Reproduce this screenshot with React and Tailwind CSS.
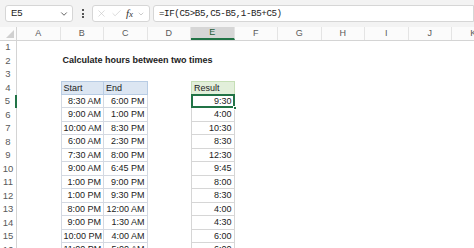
import { ChevronDown, X, Check } from "lucide-react";

const cols = ["A", "B", "C", "D", "E", "F", "G", "H", "I", "J", "K"];

// start, end, result
const rows = [
  ["8:30 AM", "6:00 PM", "9:30"],
  ["9:00 AM", "1:00 PM", "4:00"],
  ["10:00 AM", "8:30 PM", "10:30"],
  ["6:00 AM", "2:30 PM", "8:30"],
  ["7:30 AM", "8:00 PM", "12:30"],
  ["9:00 AM", "6:45 PM", "9:45"],
  ["1:00 PM", "9:00 PM", "8:00"],
  ["1:00 PM", "9:30 PM", "8:30"],
  ["8:00 PM", "12:00 AM", "4:00"],
  ["9:00 PM", "1:30 AM", "4:30"],
  ["10:00 PM", "4:00 AM", "6:00"],
  ["11:00 PM", "5:00 AM", "6:00"],
];

const cellBase = "w-[43.5px] h-full shrink-0 leading-[13px] px-[2px] whitespace-nowrap";

function Cell({ r, c }) {
  // header row of the two tables
  if (r === 4) {
    if (c === "B")
      return <div className={`${cellBase} bg-[#dce6f2] border border-[#b8cce4]`}>Start</div>;
    if (c === "C")
      return <div className={`${cellBase} bg-[#dce6f2] border-y border-r border-[#b8cce4]`}>End</div>;
    if (c === "E")
      return <div className={`${cellBase} bg-[#e2efda] border border-[#c6dfb6]`}>Result</div>;
  }
  if (r >= 5) {
    const row = rows[r - 5];
    if (c === "B")
      return <div className={`${cellBase} text-right border-l border-r border-b border-[#d4d9e2]`}>{row[0]}</div>;
    if (c === "C")
      return <div className={`${cellBase} text-right border-r border-b border-[#d4d9e2]`}>{row[1]}</div>;
    if (c === "E") {
      if (r === 5)
        return (
          <div className={`${cellBase} relative text-right border-x border-b border-[#d6d6d6]`}>
            {row[2]}
            <div className="absolute -left-[1px] -top-[1px] -right-[1px] -bottom-[1px] border-2 border-[#217346]" />
            <div className="absolute -right-[3px] -bottom-[3px] w-[4px] h-[4px] bg-[#217346] border border-white" />
          </div>
        );
      return <div className={`${cellBase} text-right border-x border-b border-[#d6d6d6]`}>{row[2]}</div>;
    }
  }
  if (r === 2 && c === "B")
    return <div className={`${cellBase} font-bold overflow-visible`}>Calculate hours between two times</div>;
  return <div className={cellBase} />;
}

export default function App() {
  return (
    <div className="w-[474px] h-[248px] overflow-hidden bg-white font-['Liberation_Sans',Arial,sans-serif] text-[9px] text-[#222]">
      {/* formula bar */}
      <div className="h-[27px] bg-[#f3f3f3] flex items-center pl-[5px] gap-[3px]">
        <div className="w-[68px] h-[17px] bg-white border border-[#d6d6d6] rounded-[3px] flex items-center justify-between pl-[5px] pr-[3px] text-[9.5px]">
          <span>E5</span>
          <ChevronDown size={10} strokeWidth={2} className="text-[#444]" />
        </div>
        <div className="w-[13px] flex flex-col items-center gap-[1.5px]">
          <span className="w-[2px] h-[2px] bg-[#555]" />
          <span className="w-[2px] h-[2px] bg-[#555]" />
          <span className="w-[2px] h-[2px] bg-[#555]" />
        </div>
        <div className="w-[58px] h-[17px] bg-white border border-[#d6d6d6] rounded-[3px] flex items-center pl-[3px] gap-[4px] text-[#c4c4c4]">
          <X size={11} strokeWidth={1.3} />
          <Check size={11} strokeWidth={1.3} />
          <span className="font-['Liberation_Serif',serif] italic text-[11px] text-[#333] leading-none">
            f<span className="text-[9px]">x</span>
          </span>
          <ChevronDown size={8} strokeWidth={1.5} className="text-[#999]" />
        </div>
        <div className="flex-1 h-[17px] bg-white border border-[#d6d6d6] rounded-l-[3px] flex items-center pl-[5px] text-[#222]">
          <span className="font-['Liberation_Mono',monospace] text-[9.2px] tracking-[-0.4px] leading-none">
            =IF(C5&gt;B5,C5-B5,1-B5+C5)
          </span>
        </div>
      </div>

      {/* column headers */}
      <div className="flex h-[13.5px] bg-[#fbfbfb] border-b border-[#d4d4d4] text-[#5a5a5a]">
        <div className="w-[17px] shrink-0 relative border-r border-[#d4d4d4]">
          <div className="absolute right-[2px] bottom-[2px] w-0 h-0 border-l-[8px] border-l-transparent border-b-[8px] border-b-[#d0d0d0]" />
        </div>
        {cols.map((c) => (
          <div
            key={c}
            className={`w-[43.5px] shrink-0 flex items-center justify-center border-r border-[#e4e4e4] ${
              c === "E" ? "bg-[#d6d6d6] border-b-2 border-b-[#217346] text-[#1e5c37]" : ""
            }`}
          >
            {c}
          </div>
        ))}
      </div>

      {/* rows */}
      {Array.from({ length: 16 }, (_, i) => i + 1).map((r) => (
        <div key={r} className="flex h-[13.5px]">
          <div
            className={`w-[17px] shrink-0 flex items-center justify-center text-[9.5px] text-[#5a5a5a] bg-white border-r ${
              r === 5 ? "border-r-2 border-r-[#217346] bg-[#d6d6d6] text-[#1e5c37]" : "border-[#d4d4d4]"
            }`}
          >
            {r}
          </div>
          {cols.map((c) => (
            <Cell key={c} r={r} c={c} />
          ))}
        </div>
      ))}
    </div>
  );
}
